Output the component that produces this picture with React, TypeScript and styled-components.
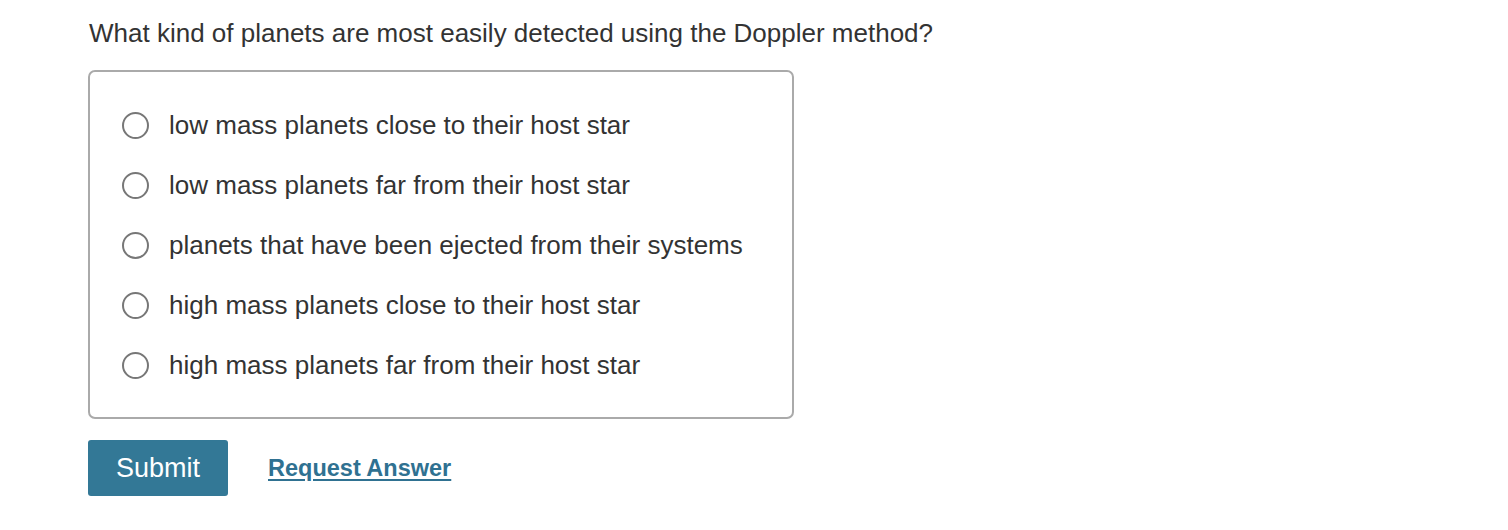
import React from 'react';
import styled, {createGlobalStyle} from "styled-components";

const GlobalStyle = createGlobalStyle`
  body {
    margin: 0;
    background: #ffffff;
    font-family: "Liberation Sans", Arial, sans-serif;
    color: #333333;
  }
`

const options = [
    "low mass planets close to their host star",
    "low mass planets far from their host star",
    "planets that have been ejected from their systems",
    "high mass planets close to their host star",
    "high mass planets far from their host star",
]

export default function App() {
    return (
        <>
            <GlobalStyle/>
            <Wrapper>
                <Question>What kind of planets are most easily detected using the Doppler method?</Question>
                <OptionsBox>
                    {options.map((text, i) => (
                        <Option key={i}>
                            <Radio type="radio" name="answer"/>
                            <OptionText>{text}</OptionText>
                        </Option>
                    ))}
                </OptionsBox>
                <Actions>
                    <SubmitButton>Submit</SubmitButton>
                    <RequestLink href="#">Request Answer</RequestLink>
                </Actions>
            </Wrapper>
        </>
    );
}

const Wrapper = styled.div`
  padding: 16px 0 0 88px;
`

const Question = styled.p`
  margin: 0;
  padding-left: 1px;
  font-size: 26px;
  line-height: 34px;
  color: #333;
`

const OptionsBox = styled.div`
  box-sizing: border-box;
  width: 706px;
  height: 349px;
  margin-top: 20px;
  border: 2px solid #aaaaaa;
  border-radius: 7px;
  padding: 35px 0 0 32px;
  display: flex;
  flex-direction: column;
  gap: 24px;
`

const Option = styled.label`
  display: flex;
  align-items: center;
  height: 36px;
  cursor: pointer;
`

const Radio = styled.input`
  appearance: none;
  box-sizing: border-box;
  width: 27px;
  height: 27px;
  margin: 0 20px 0 0;
  border: 2px solid #777777;
  border-radius: 50%;
  background: #fff;
`

const OptionText = styled.span`
  font-size: 26px;
  color: #333;
`

const Actions = styled.div`
  display: flex;
  align-items: center;
  gap: 40px;
  margin-top: 21px;
`

const SubmitButton = styled.button`
  width: 140px;
  height: 56px;
  border: none;
  border-radius: 3px;
  background: #337896;
  color: #fff;
  font-family: "Liberation Sans", Arial, sans-serif;
  font-size: 27px;
`

const RequestLink = styled.a`
  font-size: 23.5px;
  font-weight: 700;
  color: #2f7191;
  text-decoration: underline;
  text-underline-offset: 3px;
`
